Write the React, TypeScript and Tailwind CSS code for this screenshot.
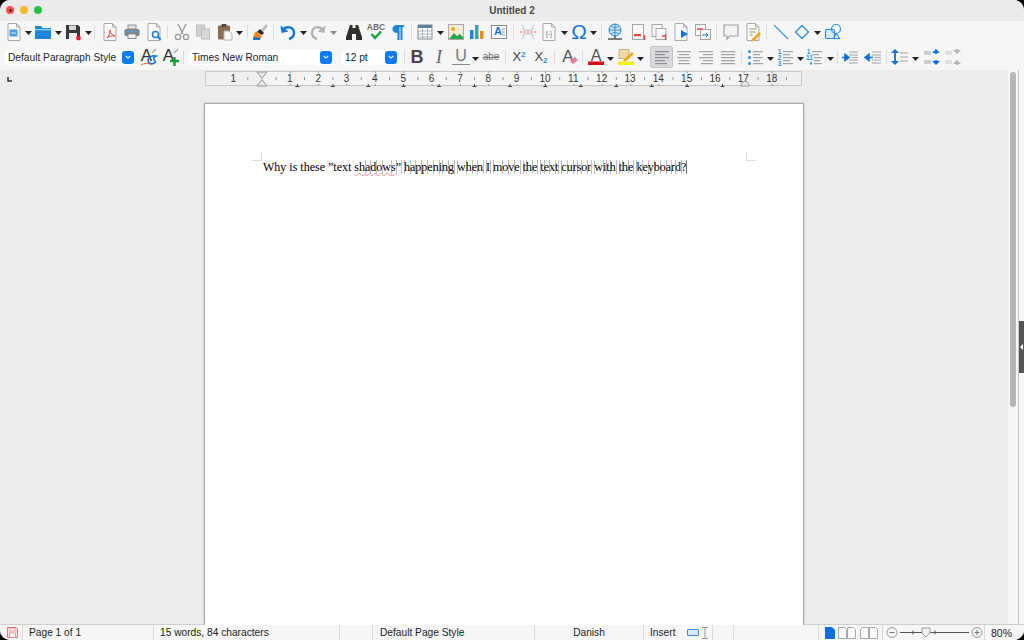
import type { ReactNode } from 'react'

const BLUE = '#2b8fe6'
const GRAY = '#9b9b9b'

function Ico({ className = '', children }: { className?: string; children: ReactNode }) {
  return (
    <svg viewBox="0 0 20 20" className={`w-[20px] h-[20px] shrink-0 ${className}`}>
      {children}
    </svg>
  )
}

function Arrow({ className = '' }: { className?: string }) {
  return (
    <svg viewBox="0 0 7 4" className={`w-[7px] h-[4px] shrink-0 mt-[3px] ${className}`}>
      <path d="M0 0h7L3.5 4z" fill="#222" />
    </svg>
  )
}

function Sep({ className = '' }: { className?: string }) {
  return <div className={`w-px h-[14px] bg-[#dcdcdc] shrink-0 ${className}`} />
}

function Page({ children }: { children?: ReactNode }) {
  return (
    <>
      <path d="M4 1.5h8.5l3.5 3.5v13.5H4z" fill="#fafafa" stroke="#a9a9a9" />
      <path d="M12.5 1.5V5H16" fill="none" stroke="#a9a9a9" />
      {children}
    </>
  )
}

function Lines({ x = [3, 3, 3, 3, 3], w = [14, 10, 14, 10, 14], color = '#a2a2a2' }: { x?: number[]; w?: number[]; color?: string }) {
  return (
    <>
      {[4, 7, 10, 13, 16].map((y, i) => (
        <rect key={y} x={x[i]} y={y} width={w[i]} height="1.2" fill={color} />
      ))}
    </>
  )
}

function Combo({ label, className }: { label: string; className: string }) {
  return (
    <div className={`h-[15px] bg-white rounded-[4px] flex items-center justify-between pl-[3px] pr-px shrink-0 ${className}`}>
      <span className="text-[10.2px] text-[#222] whitespace-nowrap mt-px">{label}</span>
      <div className="w-[12px] h-[13px] rounded-[3px] bg-[#0a7cf5] flex items-center justify-center">
        <svg viewBox="0 0 8 5" className="w-[6px] h-[4px]">
          <path d="M1 1l3 3 3-3" fill="none" stroke="#fff" strokeWidth="1.4" />
        </svg>
      </div>
    </div>
  )
}

function ToolbarOne() {
  return (
    <div className="h-[23px] flex items-center pl-[4px] pb-[2px]">
      <Ico><Page><rect x="5.5" y="7.5" width="8" height="7" fill="#4a9fe6" /><path d="M7 11h5" stroke="#d9ecfb" /></Page></Ico>
      <Arrow className="ml-px" />
      <Ico className="ml-px">
        <path d="M2 4h6l1.5 2H18v11H2z" fill="#1c87d6" />
        <rect x="2" y="7" width="16" height="1.3" fill="#8fd0f5" />
      </Ico>
      <Arrow className="ml-0.5" />
      <Ico className="ml-px">
        <path d="M3 3h12l2 2v12H3z" fill="#38383a" />
        <rect x="6" y="3.5" width="7" height="4.5" fill="#d8d8d8" />
        <rect x="6" y="11" width="8" height="6" fill="#efefef" />
        <circle cx="15.5" cy="16" r="2.4" fill="#ee1c25" />
      </Ico>
      <Arrow className="ml-0.5" />
      <Sep className="ml-0.5" />
      <Ico className="ml-[5px]">
        <Page><path d="M7 16c2-2 3-5 3-8 0 3 2 5 5 6-3-.3-6 0-8 2z" fill="none" stroke="#e0473c" strokeWidth="1" /></Page>
      </Ico>
      <Ico className="ml-0.5">
        <rect x="6" y="3" width="8" height="4" fill="#e2e2e2" stroke="#8b8f94" />
        <rect x="2.5" y="7" width="15" height="7" rx="1.5" fill="#7f868e" />
        <rect x="2.5" y="9" width="15" height="1.2" fill="#5d97cf" />
        <rect x="6" y="12" width="8" height="4.5" fill="#f2f2f2" stroke="#8b8f94" />
      </Ico>
      <Ico className="ml-0.5">
        <Page>
          <circle cx="11.5" cy="12.5" r="3" fill="#fff" stroke="#1a7fd9" strokeWidth="1.6" />
          <path d="M13.7 14.7l3 3" stroke="#1a7fd9" strokeWidth="2" />
        </Page>
      </Ico>
      <Sep className="ml-[3px]" />
      <Ico className="ml-1">
        <path d="M6 2l5 10M14 2L9 12" stroke={GRAY} strokeWidth="1.4" />
        <circle cx="6" cy="15" r="2.6" fill="none" stroke={GRAY} strokeWidth="1.4" />
        <circle cx="14" cy="15" r="2.6" fill="none" stroke={GRAY} strokeWidth="1.4" />
      </Ico>
      <Ico className="ml-px">
        <rect x="3.5" y="3" width="8" height="11" fill="#cfcfcf" stroke="#bdbdbd" />
        <rect x="8.5" y="7" width="8" height="10" fill="#d8d8d8" stroke="#bdbdbd" />
      </Ico>
      <Ico className="ml-0.5">
        <rect x="3" y="3.5" width="12" height="14" rx="1" fill="#8a6d4e" />
        <rect x="6.5" y="2" width="5" height="3" fill="#4e4e4e" />
        <path d="M9 9h5l3 3v6H9z" fill="#f7f7f7" stroke="#b5b5b5" />
      </Ico>
      <Arrow className="ml-px" />
      <Sep className="ml-1" />
      <Ico className="ml-0.5">
        <path d="M11 8l5-6 2 2-5 6z" fill="#bdbdbd" />
        <path d="M10 7l4 4-2 2-5-3z" fill="#2a2a2a" />
        <path d="M6 9l6 5-2 4H3c0-3 1-6 3-9z" fill="#f0840c" />
        <path d="M3 18c0-1 .2-2 .5-3l7 1-1 2z" fill="#1a6fd0" />
      </Ico>
      <Sep className="ml-[3px]" />
      <Ico className="ml-1">
        <path d="M5 8c3-4 11-4 11 3 0 3-2 5-5 6" fill="none" stroke="#1475d9" strokeWidth="2.4" />
        <path d="M2.5 3.5l1 7.5 7-1.5z" fill="#1475d9" />
      </Ico>
      <Arrow className="ml-0.5" />
      <Ico className="ml-px">
        <path d="M15 8c-3-4-11-4-11 3 0 3 2 5 5 6" fill="none" stroke="#b4b4b4" strokeWidth="2.4" />
        <path d="M17.5 3.5l-1 7.5-7-1.5z" fill="#b4b4b4" />
      </Ico>
      <Arrow className="ml-0.5 opacity-50" />
      <Ico className="ml-[7px]">
        <path d="M6 3h2.5v3h3V3H14l4 12v3h-6v-6H8v6H2v-3z" fill="#2f2f2f" />
      </Ico>
      <Ico className="ml-0.5">
        <text x="10" y="8" textAnchor="middle" fontSize="8.5" fontWeight="700" fill="#6e6e6e" fontFamily="Liberation Sans">ABC</text>
        <path d="M5.5 12l3.5 4 6-6.5" fill="none" stroke="#16a23a" strokeWidth="2.4" />
      </Ico>
      <Ico className="ml-0.5">
        <path d="M9 3h7v2h-1.5v13h-2V5h-1v13h-2v-7c-3 0-5-1.5-5-4s2-4 4.5-4z" fill="#1a83dc" />
      </Ico>
      <Sep className="ml-[3px]" />
      <Ico className="ml-[3px]">
        <rect x="3" y="3" width="14" height="14" fill="#fff" stroke="#8a8a8a" />
        <rect x="3" y="3" width="14" height="3" fill="#5d7fa6" />
        <path d="M3 9h14M3 12h14M3 15h14M7.5 6v11M12.5 6v11" stroke="#9aa4ae" strokeWidth="0.8" />
      </Ico>
      <Arrow className="ml-0.5" />
      <Ico className="ml-0.5">
        <rect x="2.5" y="2.5" width="15" height="15" fill="#f5ecd6" stroke="#a9a9a9" />
        <circle cx="7" cy="7" r="2" fill="#f2a21d" />
        <path d="M3 17l5-6 3 3 3-2 3 3v2z" fill="#23a94a" />
      </Ico>
      <Ico className="ml-px">
        <rect x="3" y="8" width="3.5" height="9" fill="#1a86e0" />
        <rect x="8" y="3" width="3.5" height="14" fill="#18b3b0" />
        <rect x="13" y="9" width="3.5" height="8" fill="#f28b14" />
      </Ico>
      <Ico className="ml-0.5">
        <rect x="2.5" y="3.5" width="15" height="13" fill="#fff" stroke="#8a8a8a" />
        <text x="9" y="13" textAnchor="middle" fontSize="11" fontWeight="700" fill="#1475d9" fontFamily="Liberation Sans">A</text>
        <path d="M13 7h3M13 10h3M13 13h3" stroke="#999" />
      </Ico>
      <Sep className="ml-1" />
      <Ico className="ml-1">
        <path d="M5 3v5h10V3M5 17v-5h10v5" fill="none" stroke="#c4c4c4" />
        <path d="M2 10h16" stroke="#ea5b55" strokeDasharray="2 1.5" />
      </Ico>
      <Ico className="ml-px">
        <Page><text x="10" y="13.5" textAnchor="middle" fontSize="6.5" fill="#777" fontFamily="Liberation Sans">{'{-}'}</text></Page>
      </Ico>
      <Arrow className="ml-0.5" />
      <div className="w-[20px] h-[20px] ml-px shrink-0 text-center text-[21px] leading-[20px] text-[#1475d9]">Ω</div>
      <Arrow className="ml-px" />
      <Sep className="ml-1" />
      <Ico className="ml-[3px]">
        <circle cx="10" cy="8" r="6" fill="#cfe6fa" stroke="#1a7fd9" />
        <path d="M4 8h12M10 2v12M6 4c3 2 5 2 8 0M6 12c3-2 5-2 8 0" fill="none" stroke="#1a7fd9" strokeWidth="0.8" />
        <path d="M3 17h14M10 14v3" stroke="#555" strokeWidth="1.5" />
      </Ico>
      <Ico className="ml-[3px]">
        <rect x="4.5" y="2.5" width="11" height="15" fill="#fafafa" stroke="#a5a5a5" />
        <rect x="6" y="12" width="7" height="2.2" fill="#e8453c" />
        <path d="M16.5 13v5" stroke="#e8453c" strokeWidth="1.5" />
      </Ico>
      <Ico className="ml-px">
        <rect x="3" y="2.5" width="10" height="12" fill="#fafafa" stroke="#a5a5a5" />
        <rect x="7" y="6.5" width="10" height="11" fill="#fafafa" stroke="#a5a5a5" />
        <path d="M13 14h4M16.5 12v6" stroke="#e8453c" strokeWidth="1.3" />
      </Ico>
      <Ico className="ml-0.5">
        <Page><path d="M10 8l7 4-7 4z" fill="#1475d9" /></Page>
      </Ico>
      <Ico className="ml-0.5">
        <rect x="2.5" y="2.5" width="10" height="11" fill="#fafafa" stroke="#a5a5a5" />
        <rect x="7.5" y="7.5" width="10" height="10" fill="#fafafa" stroke="#a5a5a5" />
        <path d="M4 7h6" stroke="#e8453c" strokeWidth="1.5" />
        <path d="M9 13h6M13 11l2 2-2 2" fill="none" stroke="#1475d9" />
      </Ico>
      <Sep className="ml-[3px]" />
      <Ico className="ml-1">
        <path d="M3 3h14v11H9l-3 3v-3H3z" fill="#f3f3f3" stroke="#a0a0a0" strokeWidth="1.2" />
      </Ico>
      <Ico className="ml-0.5">
        <Page>
          <path d="M6.5 7h7M6.5 10h6M6.5 13h3" stroke="#a08a70" />
          <path d="M9 17l7-7 2 2-7 7-3 .5z" fill="#f2a81d" />
        </Page>
      </Ico>
      <Sep className="ml-[3px]" />
      <Ico className="ml-1">
        <path d="M3 3l14 14" stroke="#3f9ae8" strokeWidth="1.2" />
      </Ico>
      <Ico className="ml-px">
        <path d="M10 3.5l6.5 6.5-6.5 6.5L3.5 10z" fill="none" stroke="#2b8fe6" strokeWidth="1.3" />
      </Ico>
      <Arrow className="ml-0.5" />
      <Ico className="ml-0.5">
        <rect x="2.5" y="7.5" width="9" height="9" rx="1" fill="#d7ebfb" stroke="#2b8fe6" strokeWidth="1.2" />
        <circle cx="13" cy="7" r="4.5" fill="none" stroke="#2b8fe6" strokeWidth="1.2" />
        <path d="M10.5 16.5l3-5 3 5z" fill="none" stroke="#2b8fe6" strokeWidth="1.2" />
      </Ico>
    </div>
  )
}

function ToolbarTwo() {
  return (
    <div className="h-[26px] flex items-center">
      <Combo label="Default Paragraph Style" className="w-[130px] ml-[5px]" />
      <Ico className="ml-1">
        <text x="7.5" y="14" textAnchor="middle" fontSize="17" fill="#333" fontFamily="Liberation Sans">A</text>
        <path d="M9 14c0-4 4-6 8-5-3 1-3 3-1 5s-5 5-7 0z" fill="none" stroke="#1475d9" strokeWidth="1.6" />
        <path d="M2 18c3-2 8-2 11 0" stroke="#e66a12" fill="none" />
        <path d="M13 6l4-4" stroke="#aaa" strokeWidth="1.5" />
      </Ico>
      <Ico className="ml-0.5">
        <text x="7.5" y="14" textAnchor="middle" fontSize="17" fill="#333" fontFamily="Liberation Sans">A</text>
        <path d="M9 14h9M13.5 10v9" stroke="#12a03a" strokeWidth="2.4" />
        <path d="M13 6l4-4" stroke="#aaa" strokeWidth="1.5" />
      </Ico>
      <Sep className="ml-0.5" />
      <Combo label="Times New Roman" className="w-[144px] ml-[5px]" />
      <Combo label="12 pt" className="w-[56px] ml-[9px]" />
      <Sep className="ml-[6px]" />
      <div className="w-[20px] ml-0.5 shrink-0 text-center text-[18px] font-bold text-[#444] leading-[20px]">B</div>
      <div className="w-[20px] ml-0.5 shrink-0 text-center text-[18px] italic text-[#666] leading-[20px] font-['Liberation_Serif',serif]">I</div>
      <div className="w-[20px] ml-0.5 shrink-0 text-center text-[16px] text-[#777] leading-[18px] h-[20px]">
        <span className="inline-block border-b border-[#888] px-[3px] leading-[16px]">U</span>
      </div>
      <Arrow className="ml-px" />
      <div className="w-[20px] ml-0.5 shrink-0 text-center text-[10px] text-[#777] line-through leading-[20px]">abe</div>
      <Sep className="ml-1" />
      <div className="w-[20px] ml-[3px] shrink-0 text-center text-[13px] text-[#444] leading-[20px]">
        X<sup className="text-[8px] font-bold text-[#2b8fe6] leading-none">2</sup>
      </div>
      <div className="w-[20px] ml-0.5 shrink-0 text-center text-[13px] text-[#444] leading-[20px]">
        X<sub className="text-[8px] font-bold text-[#2b8fe6] leading-none">2</sub>
      </div>
      <Sep className="ml-[3px]" />
      <Ico className="ml-[5px]">
        <text x="8" y="15" textAnchor="middle" fontSize="17" fill="#555" fontFamily="Liberation Sans">A</text>
        <path d="M10 14l5-4 3 3-5 4z" fill="#f0798f" />
      </Ico>
      <Sep className="ml-0.5" />
      <Ico className="ml-[3px]">
        <text x="10" y="13.5" textAnchor="middle" fontSize="16" fill="#555" fontFamily="Liberation Sans">A</text>
        <rect x="2" y="14.5" width="16" height="3.5" fill="#d5101c" />
      </Ico>
      <Arrow className="ml-px" />
      <Ico className="ml-0.5">
        <rect x="3" y="2.5" width="10" height="9" fill="#f0d9a8" stroke="#c8b48a" />
        <path d="M8 12l8-7 2 2-8 7-3 1z" fill="#f2a81d" />
        <rect x="2" y="14.5" width="16" height="3.5" fill="#fbee17" />
      </Ico>
      <Arrow className="ml-px" />
      <div className="w-[23px] h-[22px] ml-[6px] shrink-0 rounded-[2px] bg-[#d7d9dc] border border-[#c4c6c9] flex items-center justify-center">
        <Ico><Lines w={[14, 10, 14, 10, 12]} color="#8f8f8f" /></Ico>
      </div>
      <Ico className="ml-px"><Lines x={[3, 5, 3, 5, 4]} w={[14, 10, 14, 10, 12]} /></Ico>
      <Ico className="ml-0.5"><Lines x={[3, 7, 3, 7, 5]} w={[14, 10, 14, 10, 12]} /></Ico>
      <Ico className="ml-0.5"><Lines w={[14, 14, 14, 14, 14]} /></Ico>
      <Sep className="ml-[3px]" />
      <Ico className="ml-[3px]">
        <Lines x={[8, 8, 8, 8, 8]} w={[10, 7, 10, 7, 10]} />
        <circle cx="4.5" cy="4.5" r="1.5" fill={BLUE} />
        <circle cx="4.5" cy="10.5" r="1.5" fill={BLUE} />
        <circle cx="4.5" cy="16.5" r="1.5" fill={BLUE} />
      </Ico>
      <Arrow className="ml-0.5" />
      <Ico className="ml-px">
        <Lines x={[8, 8, 8, 8, 8]} w={[10, 7, 10, 7, 10]} />
        <text x="4.5" y="7" textAnchor="middle" fontSize="6.5" fontWeight="700" fill={BLUE} fontFamily="Liberation Sans">1</text>
        <text x="4.5" y="13" textAnchor="middle" fontSize="6.5" fontWeight="700" fill={BLUE} fontFamily="Liberation Sans">2</text>
        <text x="4.5" y="19" textAnchor="middle" fontSize="6.5" fontWeight="700" fill={BLUE} fontFamily="Liberation Sans">3</text>
      </Ico>
      <Arrow className="ml-0.5" />
      <Ico>
        <Lines x={[8, 8, 10, 10, 10]} w={[10, 7, 8, 6, 8]} />
        <text x="4.5" y="7" textAnchor="middle" fontSize="6.5" fontWeight="700" fill={BLUE} fontFamily="Liberation Sans">1</text>
        <text x="5.5" y="13" textAnchor="middle" fontSize="6.5" fontWeight="700" fill={BLUE} fontFamily="Liberation Sans">11</text>
        <circle cx="7" cy="16.5" r="1.2" fill={BLUE} />
      </Ico>
      <Arrow className="ml-[3px]" />
      <Sep className="ml-[3px]" />
      <Ico className="ml-0.5">
        <path d="M9 5h9M9 8h9M12 10.5h6M9 13h9M9 16h9" stroke="#a2a2a2" />
        <path d="M2 10.5h5M5 7.5l4 3-4 3z" stroke="#0a6fe0" strokeWidth="1.6" fill="#0a6fe0" />
      </Ico>
      <Ico className="ml-[3px]">
        <path d="M9 5h9M9 8h9M12 10.5h6M9 13h9M9 16h9" stroke="#a2a2a2" />
        <path d="M5 10.5h5M6 7.5l-4 3 4 3z" stroke="#0a6fe0" strokeWidth="1.6" fill="#0a6fe0" />
      </Ico>
      <Sep className="ml-[3px]" />
      <Ico className="ml-[3px]">
        <path d="M10 6h8M10 10h8M10 14h8" stroke="#a2a2a2" strokeWidth="1.2" />
        <path d="M5 2l4 4H1zM5 18l4-4H1z" fill="#0a6fe0" />
        <path d="M5 5v10" stroke="#0a6fe0" strokeWidth="1.8" />
      </Ico>
      <Arrow className="ml-0.5" />
      <Ico className="ml-[3px]">
        <path d="M2 5h7M2 7h7M2 14h7M2 16h7" stroke="#a2a2a2" />
        <path d="M14 2l4 4h-8zM14 18l4-4h-8z" fill="#0a6fe0" />
        <path d="M14 5v2M14 13v2" stroke="#0a6fe0" strokeWidth="1.8" />
      </Ico>
      <Ico className="ml-px">
        <path d="M2 5h7M2 7h7M2 14h7M2 16h7" stroke="#c6c6c6" />
        <path d="M14 7l4-4h-8zM14 13l4 4h-8z" fill="#b5b5b5" />
        <path d="M14 2v2M14 16v2" stroke="#b5b5b5" strokeWidth="1.8" />
      </Ico>
    </div>
  )
}

const TABS = [297.4, 332.9, 368.3, 403.7, 439.1, 474.6, 510, 545.4, 580.9, 616.3, 651.7, 687.1, 722.6]
const STOPS = Array.from({ length: 20 }, (_, i) => 233.6 + i * 28.35)

function Ruler() {
  const nums = ['1', '', ...Array.from({ length: 18 }, (_, i) => String(i + 1))]
  return (
    <div className="relative w-[597px] h-[15px] ml-[193px] border border-[#c9c9c9] bg-[#efefef] shrink-0">
      <div className="ml-[56px] w-[483px] h-full bg-[#f5f5f5]" />
      <div className="absolute left-[13px] top-0 flex text-[10px] leading-[13px] text-[#333]">
        {nums.map((n, i) => (
          <div key={i} className="w-[28.35px] text-center">{n}</div>
        ))}
      </div>
      <svg viewBox="205 71 597 18" className="absolute left-[-1px] top-[-1px] w-[597px] h-[18px] overflow-visible">
        {STOPS.map((x) => (
          <g key={x}>
            <path d={`M${x + 14.2} 77v3`} stroke="#777" strokeWidth="0.8" />
            {x > 262 && x < 800 && <path d={`M${x} 71.5v1.5M${x} 84v1.5`} stroke="#777" strokeWidth="0.8" />}
          </g>
        ))}
        {TABS.map((x) => (
          <path key={x} d={`M${x - 2} 86.5h4M${x} 84v2.5`} stroke="#333" strokeWidth="0.9" />
        ))}
        <path d="M257 72h10l-5 6.5zM257 86h10l-5-6.5z" fill="#e6e6e6" stroke="#9a9a9a" />
        <path d="M741 86v-2.5l4-2.5 4 2.5V86z" fill="#e6e6e6" stroke="#9a9a9a" />
      </svg>
    </div>
  )
}

function DocText() {
  const split = (s: string) =>
    s.split('').map((c, i) => (
      <span key={i} className="shadow-[inset_1px_0_0_#bdbdbd]">{c}</span>
    ))
  return (
    <p className="font-['Liberation_Serif',serif] text-[12px] leading-[15px] text-black whitespace-nowrap">
      {'Why is these ”text '}
      <span className="underline decoration-wavy decoration-[#ee8a8a] decoration-[0.6px]">
        sh{split('adows')}
      </span>
      {split('” happening when I move the text cursor with the keyboard?')}
      <span className="shadow-[inset_1px_0_0_#777]">{'\u200a'}</span>
    </p>
  )
}

function StatusBar() {
  return (
    <div className="h-[15px] border-t border-[#cfcfcf] bg-[#f6f6f6] flex items-center text-[10.2px] leading-[16px] text-[#222] shrink-0 box-content -mt-px">
      <div className="w-[22px] h-full pl-[7px] flex items-center shrink-0">
        <svg viewBox="0 0 11 11" className="w-[11px] h-[11px]">
          <path d="M.5.5h9l1 1v9H.5z" fill="#fbe5e4" stroke="#ef6f6a" />
          <rect x="3" y="1" width="5" height="3" fill="#fff" stroke="#ef6f6a" strokeWidth="0.7" />
          <rect x="2.5" y="6" width="6" height="4.5" fill="#fff" stroke="#ef6f6a" strokeWidth="0.7" />
        </svg>
      </div>
      <div className="w-[131px] h-full pl-[6px] border-l border-[#d8d8d8] shrink-0">Page 1 of 1</div>
      <div className="w-[186px] h-full pl-[6px] border-l border-[#d8d8d8] shrink-0">15 words, 84 characters</div>
      <div className="w-[33px] h-full border-l border-[#d8d8d8] shrink-0" />
      <div className="w-[162px] h-full pl-[7px] border-l border-[#d8d8d8] shrink-0">Default Page Style</div>
      <div className="w-[109px] h-full text-center border-l border-[#d8d8d8] shrink-0">Danish</div>
      <div className="w-[37px] h-full pl-[6px] border-l border-[#d8d8d8] shrink-0">Insert</div>
      <div className="w-[32px] h-full pl-[7px] flex items-center gap-[2px] shrink-0">
        <div className="w-[12px] h-[7px] bg-[#dbe9f8] border border-[#3d8fe0] rounded-[1px]" />
        <svg viewBox="0 0 8 12" className="w-[8px] h-[12px]">
          <path d="M1 .5h6M1 11.5h6M4 .5v11" stroke="#999" />
        </svg>
      </div>
      <div className="w-[21px] h-full border-l border-[#d8d8d8] shrink-0" />
      <div className="w-[85px] h-full border-l border-[#d8d8d8] shrink-0" />
      <div className="w-[64px] h-full border-l border-[#d8d8d8] pl-[6px] flex items-center shrink-0">
        <svg viewBox="0 0 10 12" className="w-[10px] h-[12px]">
          <path d="M0 0h7l3 3v9H0z" fill="#0a6fe8" />
        </svg>
        <svg viewBox="0 0 18 12" className="w-[18px] h-[12px] ml-[3px]">
          <path d="M.5.5h6l2 2v9h-8zM9.5.5h6l2 2v9h-8z" fill="#fafafa" stroke="#a8a8a8" />
        </svg>
        <svg viewBox="0 0 18 12" className="w-[18px] h-[12px] ml-[4px]">
          <path d="M.5 2.5l2-2h6v11h-8zM9.5.5h6l2 2v9h-8z" fill="#fafafa" stroke="#a8a8a8" />
        </svg>
      </div>
      <div className="w-[102px] h-full border-l border-[#d8d8d8] flex items-center pl-[3px] shrink-0">
        <svg viewBox="0 0 98 13" className="w-[98px] h-[13px]">
          <circle cx="6" cy="6.5" r="5" fill="#f2f2f2" stroke="#9a9a9a" />
          <path d="M3.5 6.5h5" stroke="#777" />
          <path d="M14 6.5h69" stroke="#555" />
          <path d="M27 4.5v4M49 4.5v4" stroke="#555" />
          <path d="M36 2h8v5l-4 4-4-4z" fill="#f2f2f2" stroke="#999" />
          <circle cx="91" cy="6.5" r="5" fill="#f2f2f2" stroke="#9a9a9a" />
          <path d="M88.5 6.5h5M91 4v5" stroke="#777" />
        </svg>
      </div>
      <div className="flex-1 h-full border-l border-[#d8d8d8] pl-[6px] text-[10.5px]">80%</div>
    </div>
  )
}

export default function App() {
  return (
    <div className="w-[1024px] h-[640px] bg-black font-['Liberation_Sans',Arial,sans-serif]">
      <div className="w-full h-full rounded-[10px] overflow-hidden bg-[#f6f6f6] flex flex-col">
        <div className="relative h-[21px] bg-[#ebebeb] flex items-center justify-center shrink-0">
          <div className="absolute left-[6px] top-[6px] flex gap-[6px]">
            <div className="w-[8px] h-[8px] rounded-full bg-[#f9504a] flex items-center justify-center">
              <div className="w-[3px] h-[3px] rounded-full bg-[#7a1410]" />
            </div>
            <div className="w-[8px] h-[8px] rounded-full bg-[#f8b52a]" />
            <div className="w-[8px] h-[8px] rounded-full bg-[#27c23f]" />
          </div>
          <span className="text-[10px] font-bold text-[#4a4a4a]">Untitled 2</span>
        </div>
        <ToolbarOne />
        <ToolbarTwo />
        <div className="flex-1 min-h-0 flex">
          <div className="w-[1008px] bg-[#ececec] flex flex-col shrink-0 overflow-hidden">
            <div className="flex items-start mt-px shrink-0">
              <svg viewBox="0 0 5 5" className="w-[5px] h-[5px] ml-[7px] mt-[6px] shrink-0">
                <path d="M1 0v4h4" fill="none" stroke="#333" strokeWidth="1.5" />
              </svg>
              <Ruler />
            </div>
            <div className="relative w-[600px] flex-1 ml-[204px] mt-[17px] bg-white border-x border-t border-[#a9a9a9] pl-[58px] pt-[56px] shadow-[0_0_2px_#bbb]">
              <div className="absolute left-[47px] top-[49px] w-[10px] h-[8px] border-r border-b border-[#dcdcdc]" />
              <div className="absolute left-[541px] top-[49px] w-[10px] h-[8px] border-l border-b border-[#dcdcdc]" />
              <DocText />
            </div>
          </div>
          <div className="w-[11px] border-r border-[#c8c8c8] bg-[#f6f6f6] shrink-0 pl-[2px] pt-[2px]">
            <div className="w-[6px] h-[335px] rounded-full bg-[#b6b6b6]" />
          </div>
          <div className="w-[5px] bg-[#f6f6f6] shrink-0 pt-[251px]">
            <div className="w-[5px] h-[52px] bg-[#555] flex items-center justify-center">
              <div className="w-0 h-0 border-y-[3px] border-y-transparent border-r-[3px] border-r-white" />
            </div>
          </div>
        </div>
        <StatusBar />
      </div>
    </div>
  )
}
